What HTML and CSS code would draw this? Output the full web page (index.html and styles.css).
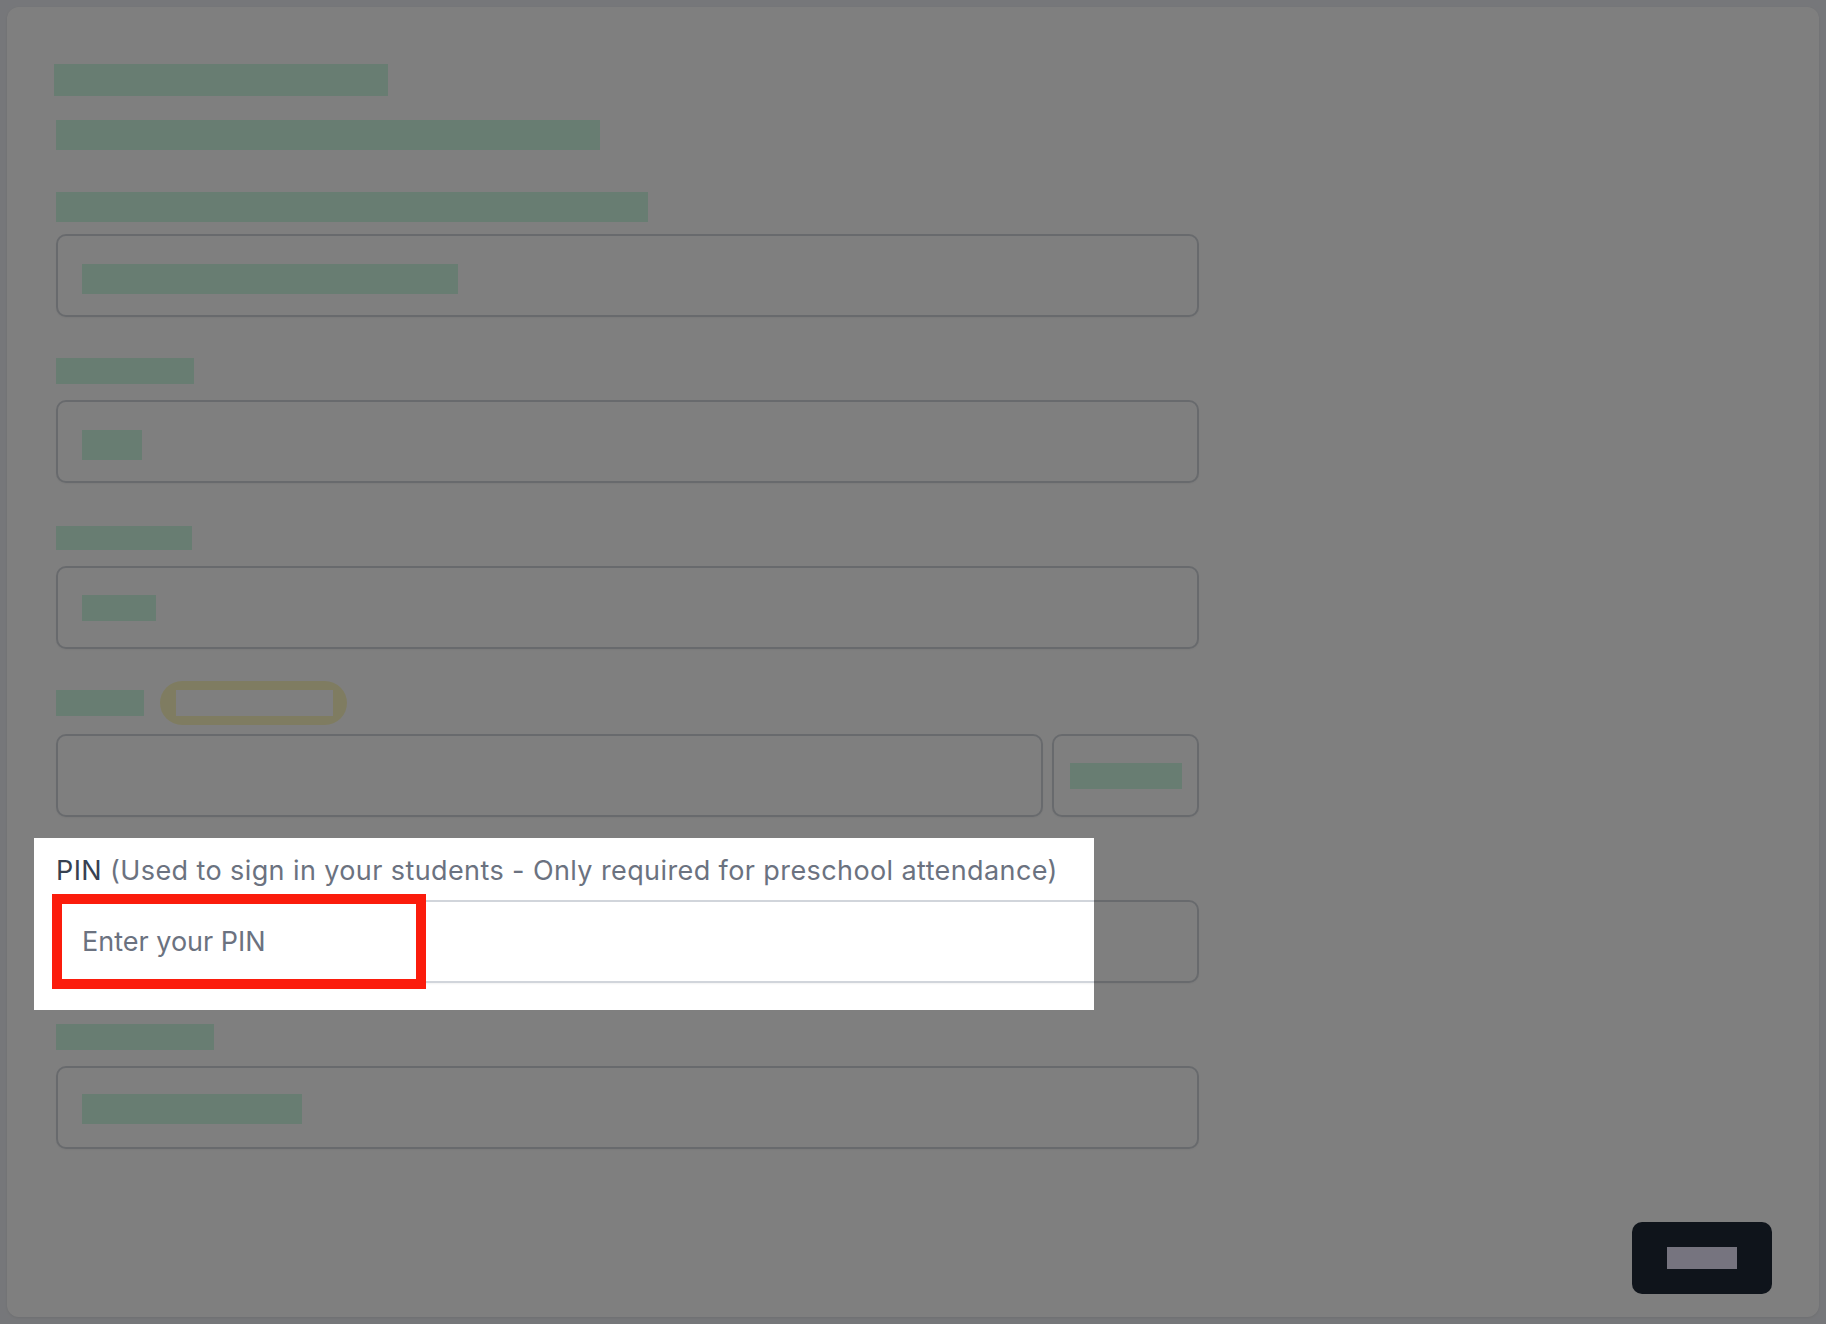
FILE: index.html
```html
<!DOCTYPE html>
<html lang="en">
<head>
  <meta charset="UTF-8" />
  <title>Profile settings</title>
  <link rel="stylesheet" href="styles.css">
</head>
<body>
  <div class="card">
    <form class="profile-form">
      <div class="mask mask-title"></div>
      <div class="mask mask-subtitle"></div>

      <!-- name -->
      <div class="field">
        <div class="field-label"><span class="mask mask-label-name"></span></div>
        <div class="input"><span class="mask mask-value-name"></span></div>
      </div>

      <!-- first / last -->
      <div class="field">
        <div class="field-label"><span class="mask mask-label-first"></span></div>
        <div class="input"><span class="mask mask-value-first"></span></div>
      </div>

      <div class="field">
        <div class="field-label"><span class="mask mask-label-last"></span></div>
        <div class="input"><span class="mask mask-value-last"></span></div>
      </div>

      <!-- email + verify -->
      <div class="field">
        <div class="field-label field-label-wide">
          <span class="mask mask-label-email"></span>
          <span class="pill"><span class="pill-text"></span></span>
        </div>
        <div class="input-row">
          <div class="input"></div>
          <div class="input input-action"><span class="mask mask-action"></span></div>
        </div>
      </div>

      <!-- PIN (highlighted) -->
      <div class="field">
        <label class="field-label-text" for="pin"><span class="label-strong">PIN</span> (Used to sign in your students - Only required for preschool attendance)</label>
        <input class="input" id="pin" type="text" placeholder="Enter your PIN">
        <div class="spotlight"></div>
        <div class="target-outline"></div>
      </div>

      <div class="field">
        <div class="field-label"><span class="mask mask-label-phone"></span></div>
        <div class="input"><span class="mask mask-value-phone"></span></div>
      </div>
    </form>

    <div class="card-footer">
      <button class="btn-save" type="button"><span class="mask mask-save"></span></button>
    </div>
  </div>
</body>
</html>
```

FILE: styles.css
```css
* {
  box-sizing: border-box;
}
html, body {
  height: 100%;
}
body {
  margin: 0;
  padding: 7px;
  background: #edeff4;
  font-family: Inter, "Liberation Sans", sans-serif;
  overflow: hidden;
}
.card {
  height: 100%;
  display: flex;
  flex-direction: column;
  padding: 57px 47px 23px 49px;
  background: #fff;
  border-radius: 12px;
  box-shadow: 0 1px 3px rgba(0, 0, 0, 0.08);
}
.profile-form {
  width: 1143px;
}

/* redacted text blocks */
.mask {
  display: block;
  flex-shrink: 0;
  background: #d1fae5;
}
.mask-title {
  width: 334px;
  height: 32px;
  margin: 0 0 24px -2px;
}
.mask-subtitle {
  width: 544px;
  height: 30px;
  margin-bottom: 42px;
}
.mask-label-name { width: 592px; height: 30px; }
.mask-label-first { width: 138px; height: 26px; }
.mask-label-last { width: 136px; height: 24px; margin-top: 2px; }
.mask-label-email { width: 88px; height: 26px; }
.mask-label-phone { width: 158px; height: 26px; }
.mask-value-name { width: 376px; height: 30px; margin-top: 7px; }
.mask-value-first { width: 60px; height: 30px; margin-top: 7px; }
.mask-value-last { width: 74px; height: 26px; }
.mask-value-phone { width: 220px; height: 30px; margin-top: 2px; }
.mask-action { width: 112px; height: 26px; }
.mask-save {
  width: 70px;
  height: 22px;
  background: #ece8fe;
}

.field {
  position: relative;
  margin-bottom: 41px;
}
.field-label {
  display: flex;
  align-items: flex-start;
  gap: 16px;
  height: 26px;
  margin-bottom: 16px;
}
.field-label-wide {
  margin-bottom: 18px;
}
.field-label-text {
  display: block;
  height: 26px;
  margin-bottom: 16px;
  font-size: 27px;
  line-height: 26px;
  letter-spacing: 0.4px;
  color: #6b7280;
  white-space: nowrap;
}
.label-strong {
  color: #374151;
}

.pill {
  display: flex;
  margin: -9px 0;
  padding: 9px 14px 9px 16px;
  background: #fef9c3;
  border-radius: 22px;
}
.pill-text {
  display: block;
  width: 157px;
  height: 26px;
  background: #fff;
}

.input {
  display: flex;
  align-items: center;
  width: 100%;
  height: 83px;
  padding: 0 24px;
  background: #fff;
  border: 2px solid #d1d5db;
  border-radius: 10px;
  box-shadow: 0 1px 2px rgba(0, 0, 0, 0.05);
  font-family: Inter, "Liberation Sans", sans-serif;
  font-size: 27px;
  color: #111827;
  outline: none;
}
.input::placeholder {
  color: #6b7280;
  opacity: 1;
}
.input-row {
  display: flex;
  gap: 9px;
}
.input-action {
  width: 147px;
  flex-shrink: 0;
  justify-content: center;
  padding: 0;
}

.card-footer {
  margin-top: auto;
  display: flex;
  justify-content: flex-end;
}
.btn-save {
  padding: 25px 35px;
  background: #1f2937;
  border: 0;
  border-radius: 10px;
}

/* onboarding tour overlay */
.spotlight {
  position: absolute;
  left: -22px;
  top: -20px;
  width: 1060px;
  height: 172px;
  box-shadow: 0 0 0 4000px rgba(0, 0, 0, 0.5);
  pointer-events: none;
  z-index: 10;
}
.target-outline {
  position: absolute;
  left: -4px;
  top: 36px;
  width: 374px;
  height: 95px;
  border: 10px solid #fb1c0c;
  z-index: 11;
}
```
